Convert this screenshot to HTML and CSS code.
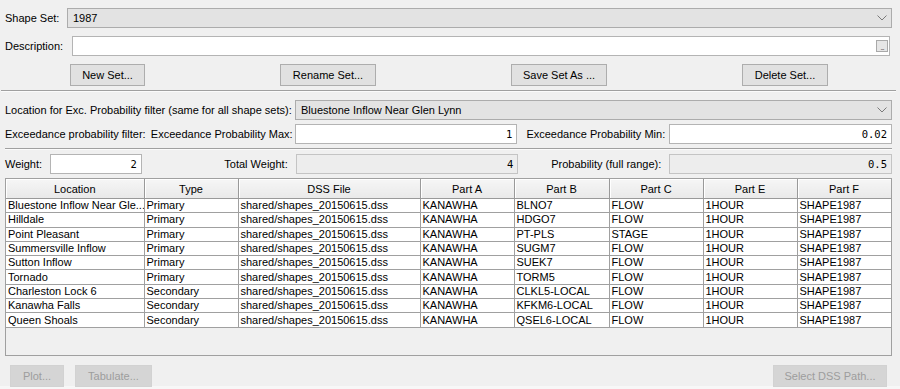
FILE: index.html
```html
<!DOCTYPE html>
<html lang="en">
<head>
    <meta charset="UTF-8">
    <title>Shape Sets</title>
    <link rel="stylesheet" href="styles.css">
</head>
<body>
    <div class="panel">
        <div class="row row-shape">
            <span class="lbl lbl-shape">Shape Set:</span>
            <div class="combo">
                <span>1987</span>
                <svg class="chev" width="10" height="6" viewBox="0 0 10 6"><polyline points="0.5,0.5 5,5 9.5,0.5" fill="none" stroke="#7a7a7a" stroke-width="1"/></svg>
            </div>
        </div>

        <div class="row row-desc">
            <span class="lbl lbl-desc">Description:</span>
            <div class="field desc-field">
                <span class="dots">...</span>
            </div>
        </div>

        <div class="btn-row">
            <button class="btn w-new">New Set...</button>
            <button class="btn w-rename">Rename Set...</button>
            <button class="btn w-save">Save Set As ...</button>
            <button class="btn w-delete">Delete Set...</button>
        </div>

        <div class="sep sep-top"></div>

        <div class="row row-loc">
            <span class="lbl lbl-loc">Location for Exc. Probability filter (same for all shape sets):</span>
            <div class="combo">
                <span>Bluestone Inflow Near Glen Lynn</span>
                <svg class="chev" width="10" height="6" viewBox="0 0 10 6"><polyline points="0.5,0.5 5,5 9.5,0.5" fill="none" stroke="#7a7a7a" stroke-width="1"/></svg>
            </div>
        </div>

        <div class="row row-exc">
            <span class="lbl lbl-filter">Exceedance probability filter:</span>
            <span class="lbl lbl-max">Exceedance Probability Max:</span>
            <div class="field num half">1</div>
            <span class="lbl lbl-min">Exceedance Probability Min:</span>
            <div class="field num half">0.02</div>
        </div>

        <div class="sep sep-mid"></div>

        <div class="row row-weight">
            <span class="lbl lbl-weight">Weight:</span>
            <div class="field num weight-field">2</div>
            <span class="lbl lbl-total">Total Weight:</span>
            <div class="field num half disabled">4</div>
            <span class="lbl lbl-prob">Probability (full range):</span>
            <div class="field num half disabled">0.5</div>
        </div>

        <div class="table-wrap">
            <table class="grid">
                <colgroup>
                    <col style="width:138px">
                    <col style="width:94px">
                    <col style="width:182px">
                    <col style="width:94px">
                    <col style="width:95px">
                    <col style="width:94px">
                    <col style="width:94px">
                    <col style="width:94px">
                </colgroup>
                <thead>
                    <tr>
                        <th>Location</th>
                        <th>Type</th>
                        <th>DSS File</th>
                        <th>Part A</th>
                        <th>Part B</th>
                        <th>Part C</th>
                        <th>Part E</th>
                        <th>Part F</th>
                    </tr>
                </thead>
                <tbody id="rows"></tbody>
            </table>
        </div>

        <div class="bottom-row">
            <button class="btn off w-plot">Plot...</button>
            <button class="btn off w-tab">Tabulate...</button>
            <span class="spacer"></span>
            <button class="btn off w-path">Select DSS Path...</button>
        </div>
    </div>
    <div class="edge"></div>

    <script>
    // shape set members
    const members = [
        ['Bluestone Inflow Near Gle...', 'Primary', 'BLNO7', 'FLOW'],
        ['Hilldale', 'Primary', 'HDGO7', 'FLOW'],
        ['Point Pleasant', 'Primary', 'PT-PLS', 'STAGE'],
        ['Summersville Inflow', 'Primary', 'SUGM7', 'FLOW'],
        ['Sutton Inflow', 'Primary', 'SUEK7', 'FLOW'],
        ['Tornado', 'Primary', 'TORM5', 'FLOW'],
        ['Charleston Lock 6', 'Secondary', 'CLKL5-LOCAL', 'FLOW'],
        ['Kanawha Falls', 'Secondary', 'KFKM6-LOCAL', 'FLOW'],
        ['Queen Shoals', 'Secondary', 'QSEL6-LOCAL', 'FLOW']
    ];

    document.getElementById('rows').innerHTML = members.map(m => `
        <tr>
            <td>${m[0]}</td>
            <td>${m[1]}</td>
            <td>shared/shapes_20150615.dss</td>
            <td>KANAWHA</td>
            <td>${m[2]}</td>
            <td>${m[3]}</td>
            <td>1HOUR</td>
            <td>SHAPE1987</td>
        </tr>`).join('');
    </script>
</body>
</html>
```

FILE: styles.css
```css
:root {
    --line: #a0a0a0;
    --field-border: #b4b4b4;
}
body {
    margin: 0;
    width: 900px;
    height: 389px;
    overflow: hidden;
    background: #f0f0f0;
    font-family: 'Liberation Sans', Arial, sans-serif;
    font-size: 11px;
    color: #000;
}
.panel {
    height: 386px;
}
.row {
    display: flex;
    align-items: center;
    height: 20px;
    padding-left: 5px;
    margin-right: 8px;
}
.lbl {
    white-space: nowrap;
}
.row-shape {
    padding-top: 8px;
}
.lbl-shape {
    width: 62px;
}
.row-desc {
    margin-top: 8px;
    margin-right: 10px;
}
.lbl-desc {
    width: 67px;
}
.combo {
    flex: 1;
    height: 20px;
    box-sizing: border-box;
    background: #e3e3e3;
    border: 1px solid #acacac;
    display: flex;
    align-items: center;
    justify-content: space-between;
    padding: 0 4px 0 5px;
}
.field {
    height: 20px;
    box-sizing: border-box;
    background: #fff;
    border: 1px solid var(--field-border);
    display: flex;
    align-items: center;
}
.desc-field {
    flex: 1;
    justify-content: flex-end;
    padding-right: 1px;
}
.dots {
    width: 10px;
    height: 10px;
    background: #e6e6e6;
    border: 1px solid #a9a9a9;
    font-size: 8px;
    line-height: 14px;
    color: #555;
    text-align: center;
    overflow: hidden;
    letter-spacing: -1px;
}
.num {
    justify-content: flex-end;
    padding-right: 4px;
    font-family: 'DejaVu Sans Mono', 'Liberation Mono', monospace;
    font-size: 10.5px;
}
.disabled {
    background: #ededed;
    border-color: #c4c4c4;
}
.btn-row {
    display: flex;
    gap: 135px;
    padding-left: 70px;
    margin-top: 8px;
}
.btn {
    height: 22px;
    box-sizing: border-box;
    background: #e1e1e1;
    border: 1px solid #adadad;
    font-family: inherit;
    font-size: 11px;
    color: #000;
    padding: 0;
}
.w-new { width: 75px; }
.w-rename { width: 96px; }
.w-save { width: 96px; }
.w-delete { width: 86px; }
.sep {
    border-top: 1px solid #a0a0a0;
    border-bottom: 1px solid #fbfbfb;
}
.sep-top {
    margin: 4px 4px 0 1px;
}
.row-loc {
    margin-top: 8px;
}
.lbl-loc {
    width: 290px;
}
.row-exc {
    margin-top: 4px;
}
.lbl-filter {
    width: 146px;
}
.lbl-max {
    width: 144px;
}
.half {
    width: 223px;
}
.lbl-min {
    width: 143px;
    padding-left: 9px;
}
.sep-mid {
    margin: 4px 8px 0 5px;
}
.row-weight {
    margin-top: 4px;
}
.lbl-weight {
    width: 45px;
}
.weight-field {
    width: 92px;
}
.lbl-total {
    width: 146px;
    text-align: right;
    padding-right: 8px;
}
.lbl-prob {
    width: 143px;
    text-align: right;
    padding-right: 8px;
}
.table-wrap {
    margin: 4px 8px 0 5px;
    height: 178px;
    box-sizing: border-box;
    border: 1px solid var(--line);
    background: #f0f0f0;
    overflow: hidden;
}
.grid {
    border-collapse: collapse;
    table-layout: fixed;
    width: 885px;
}
.grid th {
    height: 19px;
    padding: 0;
    font-weight: normal;
    text-align: center;
    background: linear-gradient(#f6f6f6, #e9e9e9);
    border-right: 1px solid #999;
    border-bottom: 1px solid #999;
    box-shadow: inset 1px 1px 0 #fff;
}
.grid td {
    height: 13.3px;
    padding: 0 0 0 2px;
    background: #fff;
    border-right: 1px solid var(--line);
    border-bottom: 1px solid var(--line);
    white-space: nowrap;
    overflow: hidden;
    line-height: 13px;
}
.bottom-row {
    display: flex;
    gap: 11px;
    padding: 0 13px 0 10px;
    margin-top: 9px;
}
.spacer {
    flex: 1;
}
.btn.off {
    background: #d5d5d5;
    border-color: #d2d2d2;
    color: #9d9d9d;
}
.w-plot { width: 54px; }
.w-tab { width: 77px; }
.w-path { width: 114px; }
.edge {
    height: 3px;
    background: #f7f7f7;
}
```
